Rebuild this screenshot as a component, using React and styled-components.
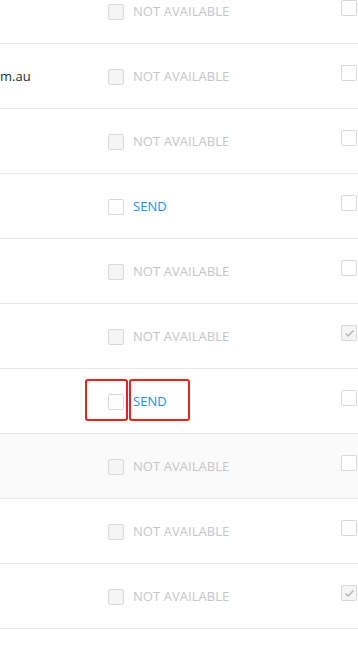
import React from "react";
import styled, { createGlobalStyle } from "styled-components";

const Global = createGlobalStyle`
  html, body { margin: 0; padding: 0; background: #fff; overflow: hidden; }
  body { font-family: "Open Sans", "Noto Sans", sans-serif; font-size: 13px; color: rgba(0,0,0,0.85); }
`;

const Table = styled.div`
  width: 358px;
  margin-top: -21px;
  display: flex;
  flex-direction: column;
`;

const Row = styled.div`
  position: relative;
  height: 64px;
  border-bottom: 1px solid #e8e8e8;
  background: ${(p) => (p.$hover ? "#fafafa" : "#fff")};
  display: flex;
  align-items: center;
`;

const NameCell = styled.div`
  width: 108px;
  white-space: nowrap;
  overflow: hidden;
  color: #2b2b3a;
  font-size: 13px;
`;

const ActionCell = styled.label`
  flex: 1;
  display: flex;
  align-items: center;
  gap: 9px;
`;

const Box = styled.span`
  box-sizing: border-box;
  width: 16px;
  height: 16px;
  border: 1px solid #d9d9d9;
  border-radius: 2px;
  background: ${(p) => (p.$disabled ? "#f5f5f5" : "#fff")};
  display: flex;
  align-items: center;
  justify-content: center;
  flex-shrink: 0;
  margin-top: ${(p) => p.$offset || 0}px;
`;

const Label = styled.span`
  font-size: 13px;
  letter-spacing: 0.05px;
  color: ${(p) => (p.$disabled ? "#c6c6c6" : "#1890ff")};
`;

const EndCell = styled.div`
  width: 17px;
  display: flex;
  margin-top: -6px;
`;

const Mark = styled.div`
  position: absolute;
  top: 10px;
  height: 42px;
  box-sizing: border-box;
  border: 2px solid #e8231b;
  border-radius: 3px;
  left: ${(p) => p.$left}px;
  width: ${(p) => p.$width}px;
`;

const Check = () => (
  <svg width="11" height="9" viewBox="0 0 11 9">
    <path d="M1.5 4.5 L4.2 7 L9.5 1.5" fill="none" stroke="#b8b8b8" strokeWidth="1.6" />
  </svg>
);

const rows = [
  { name: "", send: false, checked: false },
  { name: "m.au", send: false, checked: false },
  { name: "", send: false, checked: false },
  { name: "", send: true, checked: false },
  { name: "", send: false, checked: false },
  { name: "", send: false, checked: true },
  { name: "", send: true, checked: false, marked: true },
  { name: "", send: false, checked: false, hover: true },
  { name: "", send: false, checked: false },
  { name: "", send: false, checked: true },
];

export default function App() {
  return (
    <>
      <Global />
      <Table>
        {rows.map((r, i) => (
          <Row key={i} $hover={r.hover}>
            <NameCell>{r.name}</NameCell>
            <ActionCell>
              <Box $disabled={!r.send} $offset={1} />
              <Label $disabled={!r.send}>{r.send ? "SEND" : "NOT AVAILABLE"}</Label>
            </ActionCell>
            <EndCell>
              <Box $disabled={r.checked}>{r.checked && <Check />}</Box>
            </EndCell>
            {r.marked && (
              <>
                <Mark $left={85} $width={43} />
                <Mark $left={129} $width={61} />
              </>
            )}
          </Row>
        ))}
      </Table>
    </>
  );
}
